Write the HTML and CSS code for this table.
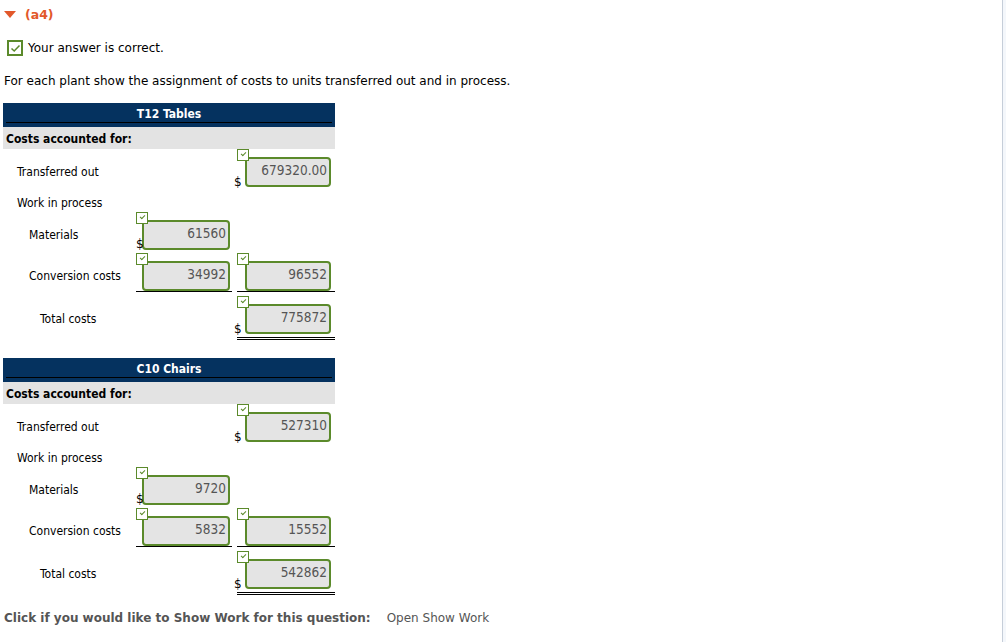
FILE: index.html
```html
<!DOCTYPE html>
<html>
<head>
<meta charset="utf-8">
<link rel="stylesheet" href="styles.css">
</head>
<body>
<div class="page">
  <div class="part-title">
    <span class="tri"></span><span class="part-name">(a4)</span>
  </div>
  <div class="result">
    <span class="okbox"><svg width="11" height="9" viewBox="0 0 11 9"><polyline points="1.5,4.5 4.2,7 9.5,1.5" fill="none" stroke="#5b8a2b" stroke-width="1.5"/></svg></span>
    <span>Your answer is correct.</span>
  </div>
  <p class="instr">For each plant show the assignment of costs to units transferred out and in process.</p>

  <div class="plant">
    <div class="plant-head"><div class="plant-head-in">T12 Tables</div></div>
    <div class="section">Costs accounted for:</div>
    <div class="row val">
      <div class="lbl l1">Transferred out</div>
      <div class="cell"></div>
      <div class="cell c2"><span class="chk"></span><span class="dollar">$</span><div class="box">679320.00</div></div>
    </div>
    <div class="row plain"><div class="lbl l1">Work in process</div></div>
    <div class="row val">
      <div class="lbl l2">Materials</div>
      <div class="cell c1"><span class="chk"></span><span class="dollar">$</span><div class="box">61560</div></div>
      <div class="cell"></div>
    </div>
    <div class="row val sum">
      <div class="lbl l2">Conversion costs</div>
      <div class="cell c1 under"><span class="chk"></span><div class="box">34992</div></div>
      <div class="cell c2 under"><span class="chk"></span><div class="box">96552</div></div>
    </div>
    <div class="row val">
      <div class="lbl l3">Total costs</div>
      <div class="cell"></div>
      <div class="cell c2 dbl"><span class="chk"></span><span class="dollar">$</span><div class="box">775872</div></div>
    </div>
  </div>

  <div class="plant">
    <div class="plant-head"><div class="plant-head-in">C10 Chairs</div></div>
    <div class="section">Costs accounted for:</div>
    <div class="row val">
      <div class="lbl l1">Transferred out</div>
      <div class="cell"></div>
      <div class="cell c2"><span class="chk"></span><span class="dollar">$</span><div class="box">527310</div></div>
    </div>
    <div class="row plain"><div class="lbl l1">Work in process</div></div>
    <div class="row val">
      <div class="lbl l2">Materials</div>
      <div class="cell c1"><span class="chk"></span><span class="dollar">$</span><div class="box">9720</div></div>
      <div class="cell"></div>
    </div>
    <div class="row val sum">
      <div class="lbl l2">Conversion costs</div>
      <div class="cell c1 under"><span class="chk"></span><div class="box">5832</div></div>
      <div class="cell c2 under"><span class="chk"></span><div class="box">15552</div></div>
    </div>
    <div class="row val">
      <div class="lbl l3">Total costs</div>
      <div class="cell"></div>
      <div class="cell c2 dbl"><span class="chk"></span><span class="dollar">$</span><div class="box">542862</div></div>
    </div>
  </div>

  <div class="showwork">
    <span class="sw-q">Click if you would like to Show Work for this question:</span>
    <span class="sw-link">Open Show Work</span>
  </div>
</div>
</body>
</html>
```

FILE: styles.css
```css
html, body {
  margin: 0;
  padding: 0;
}
body {
  background: #f4f7fb;
  font-family: "DejaVu Sans", Verdana, sans-serif;
  font-size: 12px;
  color: #000;
}
.page {
  width: 1003px;
  height: 642px;
  background: #fff;
  border-right: 1px solid #c6ced9;
  box-sizing: border-box;
  padding-top: 5px;
}
.part-title {
  display: flex;
  align-items: center;
  height: 18px;
  padding-left: 4px;
}
.tri {
  width: 0;
  height: 0;
  border-left: 6px solid transparent;
  border-right: 6px solid transparent;
  border-top: 7px solid #e2582b;
  margin-right: 9px;
}
.part-name {
  color: #e2582b;
  font-weight: bold;
  font-size: 12.5px;
}
.result {
  display: flex;
  align-items: center;
  gap: 5px;
  margin-top: 16px;
  padding-left: 7px;
  height: 18px;
}
.okbox {
  width: 12px;
  height: 12px;
  border: 2px solid #5b8a2b;
  display: flex;
  align-items: center;
  justify-content: center;
  background: #fff;
}
.instr {
  margin: 15px 0 0 4px;
  line-height: 18px;
}
.plant {
  width: 332px;
  margin: 13px 0 0 3px;
  font-family: "DejaVu Sans Condensed", "DejaVu Sans", sans-serif;
  font-size: 12px;
}
.plant + .plant {
  margin-top: 21px;
}
.plant-head {
  background: #05325f;
  height: 24px;
  padding: 0 3px;
  box-sizing: border-box;
}
.plant-head-in {
  height: 19px;
  border-bottom: 1px solid #000;
  color: #fff;
  font-weight: bold;
  text-align: center;
  line-height: 22px;
}
.section {
  background: #e3e3e3;
  height: 22px;
  line-height: 24px;
  padding-left: 3px;
  font-weight: bold;
}
.row {
  display: grid;
  grid-template-columns: 133px 99px 100px;
}
.row.plain {
  height: 22px;
}
.row.val {
  height: 41px;
}
.row.sum {
  height: 43px;
}
.lbl {
  padding-top: 9px;
  line-height: 28px;
}
.row.plain .lbl {
  padding-top: 1px;
  line-height: 24px;
}
.l1 { padding-left: 14px; }
.l2 { padding-left: 26px; }
.l3 { padding-left: 37px; }
.cell {
  position: relative;
}
.c1 .box {
  margin-left: 6px;
  width: 88px;
}
.c2 .box {
  margin-left: 10px;
  width: 86px;
}
.c1 .chk { left: 0; }
.c2 .chk { left: 2px; }
.box {
  margin-top: 8px;
  height: 30px;
  box-sizing: border-box;
  border: 2px solid #5b8a2b;
  border-radius: 4px;
  background: #e4e4e4;
  color: #555;
  font-size: 13.5px;
  text-align: right;
  padding-right: 2px;
  line-height: 23px;
}
.chk {
  position: absolute;
  top: 0;
  width: 12px;
  height: 12px;
  box-sizing: border-box;
  border: 1px solid #5b8a2b;
  background: #fff;
}
.chk::after {
  content: "";
  position: absolute;
  left: 3px;
  top: 2px;
  width: 4px;
  height: 2px;
  border-left: 1.5px solid #5b8a2b;
  border-bottom: 1.5px solid #5b8a2b;
  transform: rotate(-45deg);
}
.dollar {
  position: absolute;
  left: 0;
  top: 25px;
  font-size: 12px;
  font-family: "DejaVu Sans", sans-serif;
  line-height: 14px;
}
.c2 .dollar { left: -1px; top: 26px; }
.under {
  height: 39px;
  border-bottom: 1px solid #000;
  box-sizing: border-box;
}
.c1.under { margin-right: 3px; }
.c2.under { margin-left: 2px; margin-right: 0; }
.c2.under .box { margin-left: 8px; }
.c2.under .chk { left: 0; }
.dbl {
  height: 44px;
  border-bottom: 3px double #000;
  box-sizing: border-box;
  margin-left: 2px;
}
.dbl .box { margin-left: 8px; }
.dbl .chk { left: 0; }
.c2.dbl .dollar { left: -3px; }
.showwork {
  margin: 17px 0 0 4px;
  color: #555;
  display: flex;
  gap: 16px;
  line-height: 18px;
}
.sw-q {
  font-weight: bold;
}
```
